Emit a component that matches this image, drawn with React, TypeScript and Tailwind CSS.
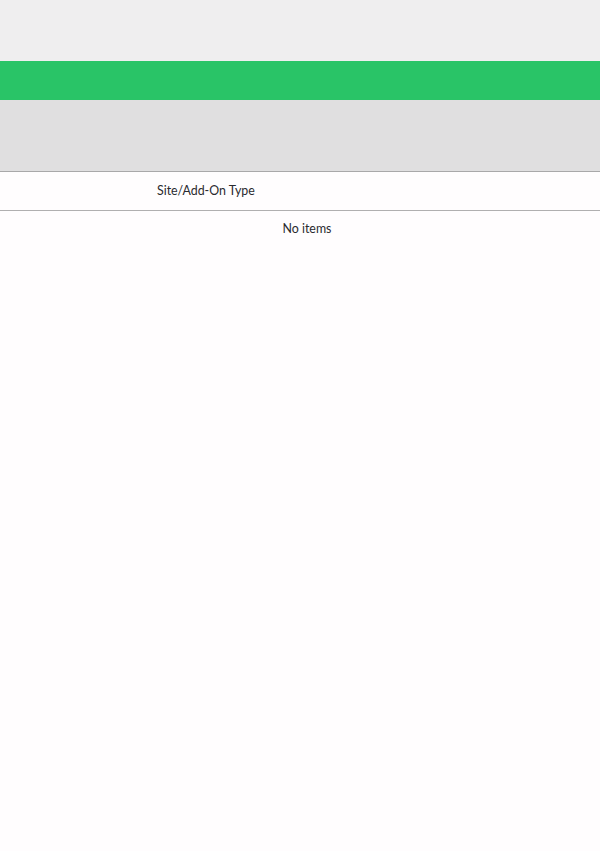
import React from 'react';

const columns = ['', 'Site/Add-On Type'];

export default function App() {
    return (
        <div className="min-h-[851px] bg-[#fffdfe] font-['Lato',sans-serif] text-[#2a2a2e]">
            {/* app chrome */}
            <div className="h-[61px] bg-[#efeeef]" />
            <div className="h-[39px] bg-[#29c467]" />
            <div className="h-[72px] bg-[#e0dfe0] border-b border-[#a9a8a9]" />

            {/* table */}
            <table className="w-full border-collapse">
                <thead>
                    <tr className="h-[38px] border-b border-[#b0afb0]">
                        {columns.map((col, i) => (
                            <th
                                key={i}
                                className={`p-0 pt-[2px] text-left text-[12.4px] font-normal ${i === 0 ? 'w-[157px]' : ''}`}
                            >
                                {col}
                            </th>
                        ))}
                    </tr>
                </thead>
                <tbody>
                    <tr>
                        <td colSpan={2} className="h-[38px] pt-[1px] text-center text-[12.4px] pl-[14px]">
                            No items
                        </td>
                    </tr>
                </tbody>
            </table>
        </div>
    );
}
